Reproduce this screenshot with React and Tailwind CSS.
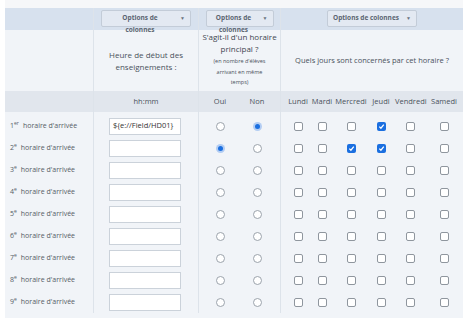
import React from 'react';

const days = [
  { name: 'Lundi', w: 'w-[22px]' },
  { name: 'Mardi', w: 'w-[26px]' },
  { name: 'Mercredi', w: 'w-[32px]' },
  { name: 'Jeudi', w: 'w-[28px]' },
  { name: 'Vendredi', w: 'w-[31px]' },
  { name: 'Samedi', w: 'w-[36px]' },
];

// principal: 'oui' | 'non' | null ; jours: indexes of checked days
const rows = [
  { n: '1', sup: 'er', value: '${e://Field/HD01}', principal: 'non', jours: [3] },
  { n: '2', sup: 'e', value: '', principal: 'oui', jours: [2, 3] },
  { n: '3', sup: 'e', value: '', principal: null, jours: [] },
  { n: '4', sup: 'e', value: '', principal: null, jours: [] },
  { n: '5', sup: 'e', value: '', principal: null, jours: [] },
  { n: '6', sup: 'e', value: '', principal: null, jours: [] },
  { n: '7', sup: 'e', value: '', principal: null, jours: [] },
  { n: '8', sup: 'e', value: '', principal: null, jours: [] },
  { n: '9', sup: 'e', value: '', principal: null, jours: [] },
];

const grid = 'grid grid-cols-[88px_105px_82px_183px]';
const cell = 'border-l border-[#dde3ea]';

const Radio = ({ checked }) =>
  checked ? (
    <span className="flex h-[9px] w-[9px] items-center justify-center rounded-full bg-[#b3cdf3]">
      <span className="h-[5px] w-[5px] rounded-full bg-[#1b6fe0]" />
    </span>
  ) : (
    <span className="h-[9px] w-[9px] rounded-full border border-[#9ba3ac] bg-white" />
  );

const Checkbox = ({ checked }) =>
  checked ? (
    <span className="flex h-[9px] w-[9px] items-center justify-center rounded-[2px] bg-[#1b6fe0]">
      <svg width="7" height="7" viewBox="0 0 8 8">
        <path d="M1.5 4.2 L3.3 6 L6.6 1.8" fill="none" stroke="white" strokeWidth="1.4" />
      </svg>
    </span>
  ) : (
    <span className="h-[9px] w-[9px] rounded-[2px] border border-[#8f969e] bg-white" />
  );

const OptionsButton = ({ w, oneLine }) => (
  <div
    className={`relative mx-auto mt-[2px] h-[17px] ${w} rounded-[2px] border border-[#c3ccd8] bg-[#e3e9f2]`}
  >
    <div
      className={`absolute left-0 right-0 top-[1px] pr-[12px] text-center text-[6.5px] font-bold leading-[12px] text-[#5b6571] ${
        oneLine ? 'whitespace-nowrap' : ''
      }`}
    >
      {oneLine ? 'Options de colonnes' : (
        <>
          Options de
          <br />
          colonnes
        </>
      )}
    </div>
    <span className="absolute right-[5px] top-[4px] text-[5px] text-[#6b7480]">▼</span>
  </div>
);

export default function App() {
  return (
    <div
      className="h-[326px] w-[474px] overflow-hidden bg-white"
      style={{ fontFamily: '"Open Sans", "Noto Sans", sans-serif' }}
    >
      <div className="ml-[5px] w-[458px]">
        <div className="h-[8px] bg-[#f6f7f9]" />
        <div className="bg-[#f1f4f8] pb-[5px] text-[#4a525c]">
          {/* options band */}
          <div className={`${grid} h-[22px] bg-[#d7e1ee]`}>
            <div />
            <div className={cell}>
              <OptionsButton w="w-[90px]" />
            </div>
            <div className={cell}>
              <OptionsButton w="w-[68px]" />
            </div>
            <div className={cell}>
              <OptionsButton w="w-[90px]" oneLine />
            </div>
          </div>

          {/* questions */}
          <div className={`${grid} h-[61px]`}>
            <div />
            <div className={`${cell} flex items-center justify-center text-center text-[8px] leading-[12px]`}>
              Heure de début des
              <br />
              enseignements :
            </div>
            <div className={`${cell} pt-[1px] text-center`}>
              <div className="text-[8px] leading-[12px] text-[#3f4650]">
                S'agit-il d'un horaire
                <br />
                principal ?
              </div>
              <div className="mt-[1px] text-[5.5px] leading-[10.5px]">
                (en nombre d'élèves
                <br />
                arrivant en même
                <br />
                temps)
              </div>
            </div>
            <div className={`${cell} flex items-center justify-center text-[7.5px]`}>
              Quels jours sont concernés par cet horaire ?
            </div>
          </div>

          {/* sub header */}
          <div className={`${grid} h-[21px] bg-[#e1e6ed] text-[7.5px]`}>
            <div />
            <div className={`${cell} flex items-center justify-center`}>hh:mm</div>
            <div className={`${cell} flex items-center pl-[4px]`}>
              <span className="w-[34px] text-center">Oui</span>
              <span className="w-[40px] text-center">Non</span>
            </div>
            <div className={`${cell} flex items-center pl-[6px]`}>
              {days.map((d) => (
                <span key={d.name} className={`${d.w} whitespace-nowrap text-center`}>
                  {d.name}
                </span>
              ))}
            </div>
          </div>

          {/* rows */}
          <div className={`${grid} h-[3px]`}>
            <div />
            <div className={cell} />
            <div className={cell} />
            <div className={cell} />
          </div>
          {rows.map((r) => (
            <div key={r.n} className={`${grid} h-[22px]`}>
              <div className="flex items-center pl-[5px] text-[7px] text-[#555d66]">
                <span>
                  {r.n}
                  <sup className="text-[5px]">{r.sup}</sup>
                </span>
                <span className="ml-[4px]">horaire d'arrivée</span>
              </div>
              <div className={`${cell} flex items-center pl-[15px]`}>
                <div className="flex h-[17px] w-[72px] items-center border border-[#cbd2da] bg-white px-[3px] text-[7.5px] text-[#333]">
                  {r.value}
                </div>
              </div>
              <div className={`${cell} flex items-center pl-[4px]`}>
                <span className="flex w-[34px] justify-center">
                  <Radio checked={r.principal === 'oui'} />
                </span>
                <span className="flex w-[40px] justify-center">
                  <Radio checked={r.principal === 'non'} />
                </span>
              </div>
              <div className={`${cell} flex items-center pl-[6px]`}>
                {days.map((d, i) => (
                  <span key={d.name} className={`${d.w} flex justify-center`}>
                    <Checkbox checked={r.jours.includes(i)} />
                  </span>
                ))}
              </div>
            </div>
          ))}
        </div>
      </div>
    </div>
  );
}
